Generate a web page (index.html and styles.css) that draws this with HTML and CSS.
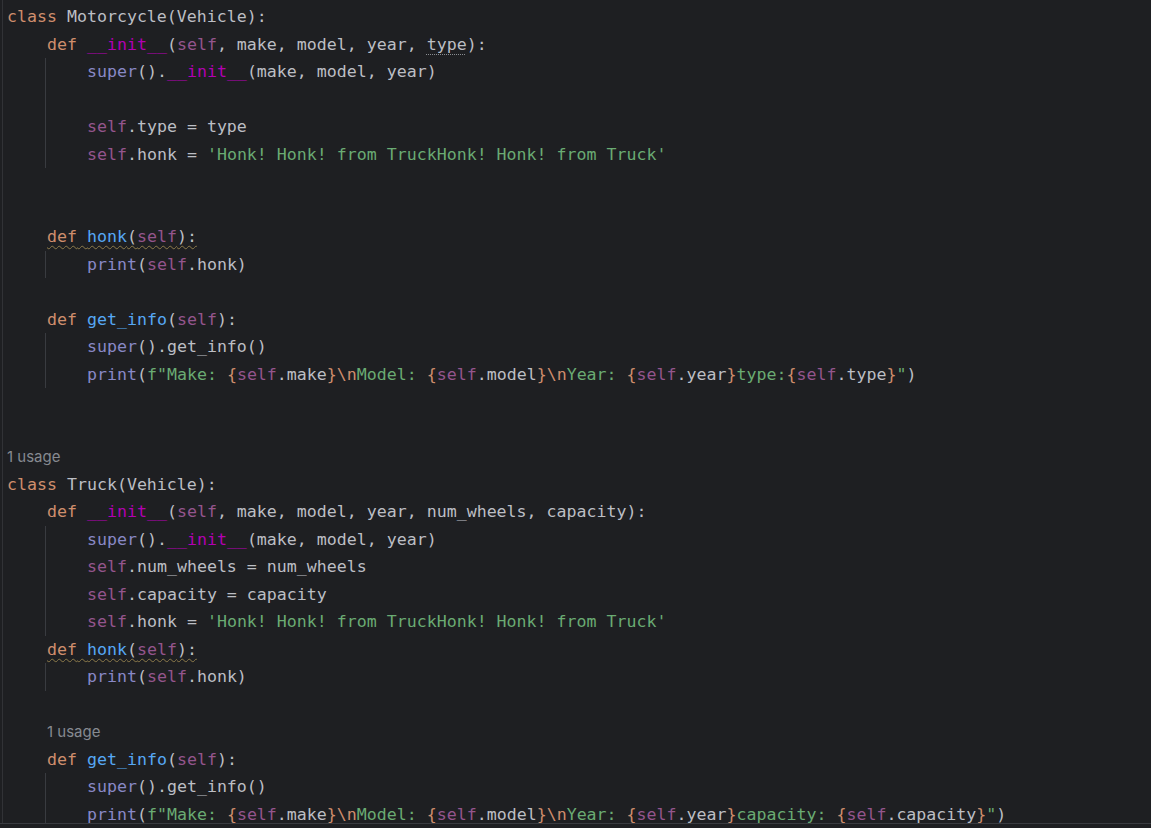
FILE: index.html
```html
<!DOCTYPE html>
<html>
<head>
<meta charset="utf-8">
<link rel="stylesheet" href="styles.css">
</head>
<body>
<div class="editor">
  <div class="code">
    <div class="ln"><span class="k">class</span> Motorcycle(Vehicle):</div>
    <div class="block">
      <div class="ln"><span class="k">def</span> <span class="m">__init__</span>(<span class="s">self</span>, make, model, year, <span class="weak">type</span>):</div>
      <div class="block">
        <div class="ln"><span class="b">super</span>().<span class="m">__init__</span>(make, model, year)</div>
        <div class="ln"> </div>
        <div class="ln"><span class="s">self</span>.type = type</div>
        <div class="ln"><span class="s">self</span>.honk = <span class="str">'Honk! Honk! from TruckHonk! Honk! from Truck'</span></div>
      </div>
      <div class="ln"> </div>
      <div class="ln"> </div>
      <div class="ln"><span class="warn"><span class="k">def</span> <span class="f">honk</span>(<span class="s">self</span>):</span></div>
      <div class="block">
        <div class="ln"><span class="b">print</span>(<span class="s">self</span>.honk)</div>
      </div>
      <div class="ln"> </div>
      <div class="ln"><span class="k">def</span> <span class="f">get_info</span>(<span class="s">self</span>):</div>
      <div class="block">
        <div class="ln"><span class="b">super</span>().get_info()</div>
        <div class="ln"><span class="b">print</span>(<span class="str">f"Make: </span><span class="k">{</span><span class="s">self</span>.make<span class="k">}\n</span><span class="str">Model: </span><span class="k">{</span><span class="s">self</span>.model<span class="k">}\n</span><span class="str">Year: </span><span class="k">{</span><span class="s">self</span>.year<span class="k">}</span><span class="str">type:</span><span class="k">{</span><span class="s">self</span>.type<span class="k">}</span><span class="str">"</span>)</div>
      </div>
      <div class="ln"> </div>
      <div class="ln"> </div>
    </div>
    <div class="ln inlay">1 usage</div>
    <div class="ln"><span class="k">class</span> Truck(Vehicle):</div>
    <div class="block">
      <div class="ln"><span class="k">def</span> <span class="m">__init__</span>(<span class="s">self</span>, make, model, year, num_wheels, capacity):</div>
      <div class="block">
        <div class="ln"><span class="b">super</span>().<span class="m">__init__</span>(make, model, year)</div>
        <div class="ln"><span class="s">self</span>.num_wheels = num_wheels</div>
        <div class="ln"><span class="s">self</span>.capacity = capacity</div>
        <div class="ln"><span class="s">self</span>.honk = <span class="str">'Honk! Honk! from TruckHonk! Honk! from Truck'</span></div>
      </div>
      <div class="ln"><span class="warn"><span class="k">def</span> <span class="f">honk</span>(<span class="s">self</span>):</span></div>
      <div class="block">
        <div class="ln"><span class="b">print</span>(<span class="s">self</span>.honk)</div>
      </div>
      <div class="ln"> </div>
      <div class="ln inlay">1 usage</div>
      <div class="ln"><span class="k">def</span> <span class="f">get_info</span>(<span class="s">self</span>):</div>
      <div class="block">
        <div class="ln"><span class="b">super</span>().get_info()</div>
        <div class="ln"><span class="b">print</span>(<span class="str">f"Make: </span><span class="k">{</span><span class="s">self</span>.make<span class="k">}\n</span><span class="str">Model: </span><span class="k">{</span><span class="s">self</span>.model<span class="k">}\n</span><span class="str">Year: </span><span class="k">{</span><span class="s">self</span>.year<span class="k">}</span><span class="str">capacity: </span><span class="k">{</span><span class="s">self</span>.capacity<span class="k">}</span><span class="str">"</span>)</div>
      </div>
    </div>
  </div>
</div>
</body>
</html>
```

FILE: styles.css
```css
html, body {
  margin: 0;
  padding: 0;
  background: #1e1f22;
}
body {
  width: 1151px;
  height: 828px;
  overflow: hidden;
}
.editor {
  height: 824px;
  border-bottom: 1px solid #393b40;
  overflow: hidden;
  box-sizing: border-box;
}
.code {
  margin-left: 2px;
  border-left: 1px solid #313236;
  padding-left: 4px;
  padding-top: 3px;
  height: 100%;
  box-sizing: border-box;
  font-family: "DejaVu Sans Mono", "Liberation Mono", monospace;
  font-size: 16.6px;
  color: #bcbec4;
}
.ln {
  height: 27.5px;
  line-height: 27.5px;
  white-space: pre;
}
.block {
  margin-left: 38px;
  padding-left: 1px;
}
.block > .block {
  border-left: 1px solid #393b40;
  margin-left: -2px;
  padding-left: 41px;
}
.code > .block {
  margin-left: 0;
  padding-left: 40px;
}
.k { color: #cf8e6d; }
.s { color: #94558d; }
.f { color: #56a8f5; }
.m { color: #b200b2; }
.b { color: #8888c6; }
.str { color: #6aab73; }
.inlay {
  font-family: Inter, "Noto Sans", sans-serif;
  font-size: 15px;
  color: #868a91;
  letter-spacing: 0;
}
.weak {
  text-decoration: underline dotted #8a8d92;
  text-decoration-thickness: 1px;
  text-underline-offset: 4px;
}
.warn {
  text-decoration: underline wavy #8c7a4a;
  text-decoration-thickness: 1px;
  text-underline-offset: 3px;
}
```
